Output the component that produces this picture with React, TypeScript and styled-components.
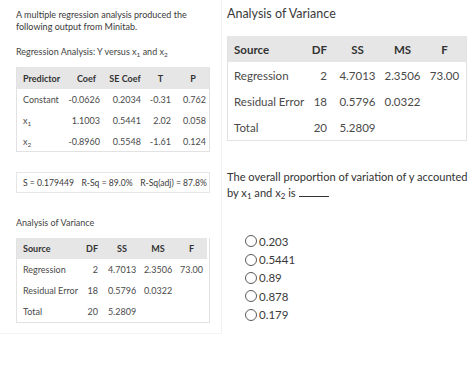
import React from 'react'
import styled, { createGlobalStyle } from 'styled-components'

const Global = createGlobalStyle`
  html, body {
    margin: 0;
    padding: 0;
    background: #ffffff;
  }
  body {
    font-family: Lato, "Open Sans", sans-serif;
    color: #333;
  }
`

const Page = styled.div`
  display: flex;
  width: 474px;
  height: 387px;
  overflow: hidden;
`

const LeftCard = styled.div`
  width: 222px;
  height: 334px;
  box-sizing: border-box;
  padding: 9px 12px 0 16px;
  border-right: 1px solid #f1f1f1;
  border-bottom: 1px solid #f4f4f4;
  font-size: 9px;
`

const Intro = styled.p`
  margin: 0;
  line-height: 12px;
  color: #3a3a3a;
`

const SubTitle = styled.p<{ $top: number }>`
  margin: ${(p) => p.$top}px 0 0;
  line-height: 12px;
  color: #444;
`

const Table = styled.div<{ $cols: string; $width: number }>`
  display: grid;
  grid-template-columns: ${(p) => p.$cols};
  width: ${(p) => p.$width}px;
  box-sizing: border-box;
  border: 1px solid #e2e2e2;
  border-top: none;
`

const Head = styled.div<{ $align?: string; $h: number }>`
  background: #e6e6e6;
  height: ${(p) => p.$h}px;
  display: flex;
  align-items: center;
  justify-content: ${(p) => p.$align || 'center'};
  font-weight: 700;
  color: #333;
  padding: 0 3px 0 6px;
  white-space: nowrap;
`

const Cell = styled.div<{ $align?: string; $h: number }>`
  height: ${(p) => p.$h}px;
  display: flex;
  align-items: center;
  justify-content: ${(p) => p.$align || 'center'};
  color: #4a4a4a;
  padding: 0 3px 0 6px;
  white-space: nowrap;
`

const Sub = styled.sub`
  font-size: 0.72em;
  vertical-align: -0.25em;
  line-height: 0;
`

const StatsBox = styled.div`
  margin-top: 20px;
  width: 194px;
  height: 21px;
  box-sizing: border-box;
  border: 1px solid #e6e6e6;
  display: flex;
  align-items: center;
  justify-content: space-between;
  padding: 0 2px 0 6px;
  font-size: 8.6px;
  color: #3a3a3a;
  white-space: nowrap;
`

const RightCol = styled.div`
  flex: 1;
  padding: 6px 0 0 5px;
`

const BigTitle = styled.div`
  font-size: 12.5px;
  line-height: 16px;
  color: #3a3a3a;
`

const RightTable = styled(Table)`
  margin-top: 14px;
  font-size: 11.5px;
`

const Question = styled.div`
  margin-top: 28px;
  font-size: 11.1px;
  line-height: 16px;
  color: #333;
  white-space: nowrap;
`

const Blank = styled.span`
  display: inline-block;
  width: 30px;
  border-bottom: 1px solid #333;
  margin-left: 3px;
`

const Options = styled.div`
  margin-top: 31px;
  padding-left: 18px;
  display: flex;
  flex-direction: column;
`

const Option = styled.label`
  display: flex;
  align-items: center;
  height: 18.4px;
  font-size: 11.5px;
  color: #3a3a3a;
`

const Radio = styled.span`
  width: 10px;
  height: 10px;
  border: 1px solid #5a5a5a;
  border-radius: 50%;
  margin-right: 2px;
`

type Row = { cells: React.ReactNode[] }

const predictorRows: Row[] = [
  { cells: ['Constant', '-0.0626', '0.2034', '-0.31', '0.762'] },
  { cells: [<>x<Sub>1</Sub></>, '1.1003', '0.5441', '2.02', '0.058'] },
  { cells: [<>x<Sub>2</Sub></>, '-0.8960', '0.5548', '-1.61', '0.124'] },
]

const anovaRows: Row[] = [
  { cells: ['Regression', '2', '4.7013', '2.3506', '73.00'] },
  { cells: ['Residual Error', '18', '0.5796', '0.0322', ''] },
  { cells: ['Total', '20', '5.2809', '', ''] },
]

const anovaHead = ['Source', 'DF', 'SS', 'MS', 'F']
const anovaAlign = ['flex-start', 'flex-end', 'center', 'center', 'center']

const PredictorTable = () => {
  const head = ['Predictor', 'Coef', 'SE Coef', 'T', 'P']
  const align = ['flex-start', 'flex-end', 'flex-end', 'flex-end', 'flex-end']
  return (
    <Table $cols="50px 36px 41px 30px 35px" $width={194} style={{ marginTop: 9 }}>
      {head.map((h, i) => (
        <Head key={h} $h={22} $align={i === 0 ? 'flex-start' : 'center'}>
          {h}
        </Head>
      ))}
      {predictorRows.map((r, ri) =>
        r.cells.map((c, ci) => (
          <Cell key={ri + '-' + ci} $h={ri === 2 ? 20 : 21} $align={align[ci]}>
            <span>{c}</span>
          </Cell>
        ))
      )}
    </Table>
  )
}

const AnovaTable = ({ big }: { big?: boolean }) => {
  const rowH = big ? 26 : 21
  const cols = big ? '78px 24px 52px 38px 46px' : '64px 20px 39px 33px 34px'
  const Wrap = big ? RightTable : Table
  return (
    <Wrap $cols={cols} $width={big ? 240 : 194} style={big ? undefined : { marginTop: 9 }}>
      {anovaHead.map((h, i) => (
        <Head key={h} $h={big ? 26 : 21} $align={i === 0 ? 'flex-start' : i === 1 ? 'flex-end' : 'center'}>
          {h}
        </Head>
      ))}
      {anovaRows.map((r, ri) =>
        r.cells.map((c, ci) => (
          <Cell key={ri + '-' + ci} $h={rowH} $align={anovaAlign[ci]}>
            <span>{c}</span>
          </Cell>
        ))
      )}
    </Wrap>
  )
}

const options = ['0.203', '0.5441', '0.89', '0.878', '0.179']

const App = () => {
  return (
    <Page>
      <Global />
      <LeftCard>
        <Intro>
          A multiple regression analysis produced the
          <br />
          following output from Minitab.
        </Intro>
        <SubTitle $top={13}>
          Regression Analysis: Y versus x<Sub>1</Sub> and x<Sub>2</Sub>
        </SubTitle>
        <PredictorTable />
        <StatsBox>
          <span>S = 0.179449</span>
          <span>R-Sq = 89.0%</span>
          <span>R-Sq(adj) = 87.8%</span>
        </StatsBox>
        <SubTitle $top={24}>Analysis of Variance</SubTitle>
        <AnovaTable />
      </LeftCard>
      <RightCol>
        <BigTitle>Analysis of Variance</BigTitle>
        <AnovaTable big />
        <Question>
          The overall proportion of variation of y accounted
          <br />
          by x<Sub>1</Sub> and x<Sub>2</Sub> is<Blank />
        </Question>
        <Options>
          {options.map((o) => (
            <Option key={o}>
              <Radio />
              {o}
            </Option>
          ))}
        </Options>
      </RightCol>
    </Page>
  )
}

export default App
